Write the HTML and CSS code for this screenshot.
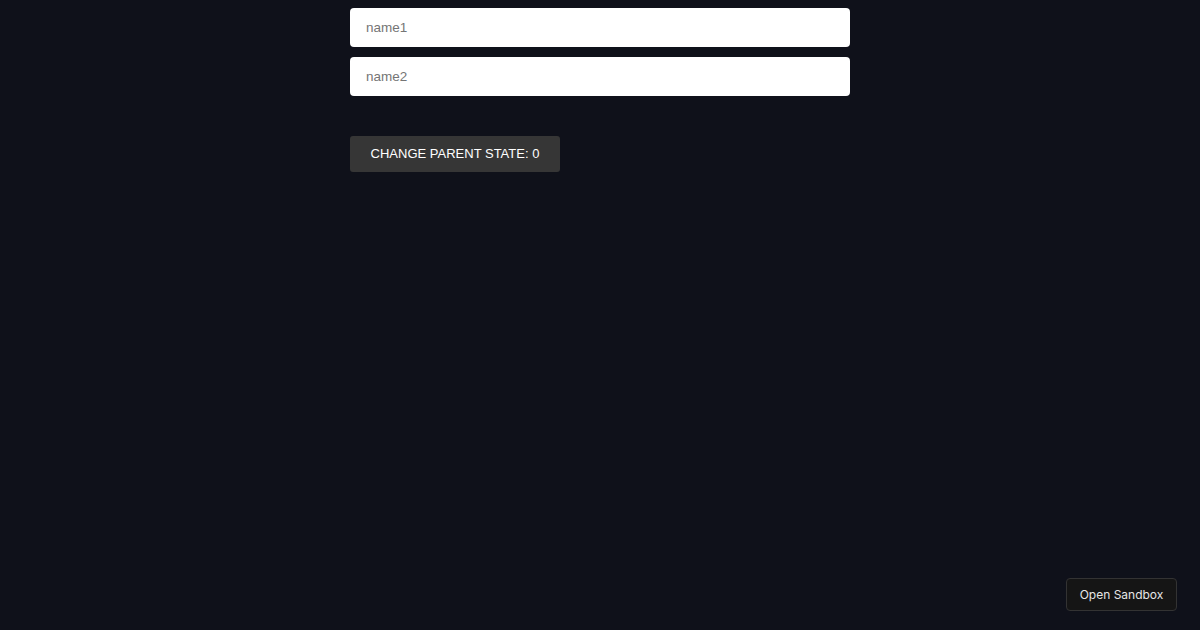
FILE: index.html
```html
<!DOCTYPE html>
<html>
<head>
<meta charset="utf-8">
<link rel="stylesheet" href="styles.css">
</head>
<body>
<main class="app">
  <input class="field" type="text" placeholder="name1">
  <input class="field" type="text" placeholder="name2">
  <button class="state-btn">CHANGE PARENT STATE: 0</button>
</main>
<a class="open-sandbox">Open Sandbox</a>
</body>
</html>
```
FILE: styles.css
```css
html, body {
  margin: 0;
  padding: 0;
  background: #0f111a;
  height: 100%;
}
body {
  font-family: "Liberation Sans", Arial, sans-serif;
  padding-top: 8px;
  box-sizing: border-box;
}
.app {
  width: 500px;
  margin: 0 auto;
  display: flex;
  flex-direction: column;
  align-items: flex-start;
}
.field {
  width: 100%;
  height: 39px;
  box-sizing: border-box;
  border: none;
  border-radius: 4px;
  background: #ffffff;
  padding: 0 16px 1px;
  font-family: "Liberation Sans", Arial, sans-serif;
  font-size: 13.5px;
  color: #333;
  margin-bottom: 10px;
  outline: none;
}
.field::placeholder {
  color: #757575;
}
.state-btn {
  margin-top: 30px;
  width: 210px;
  height: 36px;
  border: none;
  border-radius: 3px;
  background: #363636;
  color: #ffffff;
  font-family: "Liberation Sans", Arial, sans-serif;
  font-size: 13px;
  padding: 0 0 2px;
}
.open-sandbox {
  position: fixed;
  right: 23px;
  bottom: 19px;
  width: 111px;
  height: 33px;
  box-sizing: border-box;
  display: flex;
  align-items: center;
  justify-content: center;
  background: #151515;
  border: 1px solid #333333;
  border-radius: 4px;
  color: #e6e6e6;
  font-family: Inter, "Liberation Sans", sans-serif;
  font-size: 12px;
}
```
